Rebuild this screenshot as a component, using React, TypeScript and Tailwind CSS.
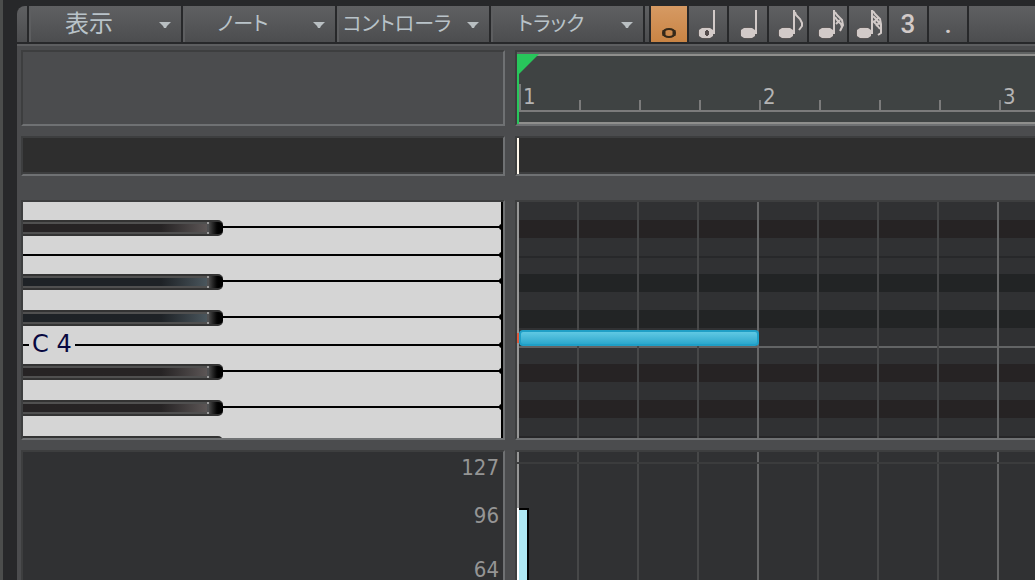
import { useState, type ReactNode } from 'react';

const MENUS = [
  { label: '表示', size: 'text-2xl' },
  { label: 'ノート', size: 'text-xl' },
  { label: 'コントローラ', size: 'text-xl' },
  { label: 'トラック', size: 'text-xl' },
];

const BLACK_KEYS = [
  { top: 'top-[18px]', warm: true },
  { top: 'top-[72px]', warm: false },
  { top: 'top-[108px]', warm: false },
  { top: 'top-[162px]', warm: true },
  { top: 'top-[198px]', warm: true },
  { top: 'top-[234px]', warm: true },
];

const KEY_LINES = ['top-[24px]', 'top-[52px]', 'top-[78px]', 'top-[114px]', 'top-[142px]', 'top-[168px]', 'top-[204px]'];

const ROWS = [
  'h-[18px] bg-[#303133]',
  'h-[18px] bg-[#262324]',
  'h-[18px] bg-[#303133]',
  'h-[2px] bg-[#27282a]',
  'h-[16px] bg-[#303133]',
  'h-[18px] bg-[#222425]',
  'h-[18px] bg-[#303133]',
  'h-[18px] bg-[#222425]',
  'h-[18px] bg-[#303133]',
  'h-[2px] bg-[#626465]',
  'h-[16px] bg-[#303133]',
  'h-[18px] bg-[#262324]',
  'h-[18px] bg-[#303133]',
  'h-[18px] bg-[#262324]',
  'h-[18px] bg-[#303133]',
  'h-[2px] bg-[#262628]',
];

const BEATS = Array.from({ length: 12 }, (_, i) => i);

interface StemmedNoteProps {
  cx: number;
  hollow?: boolean;
  children?: ReactNode;
}

function StemmedNote({ cx, hollow, children }: StemmedNoteProps) {
  return (
    <svg viewBox="0 0 38 36" className="h-9 w-[38px]" fill="none" stroke="#d2cac8" strokeWidth="2">
      <ellipse cx={cx} cy="27" rx="8" ry="6" fill="#6a5f5c" fillOpacity="0.6" stroke="none" />
      <path d={`M${cx - 4} 22h8l3 2v6l-3 2h-8l-3-2v-6z`} fill="#d2cac8" stroke="none" />
      {hollow && <path d={`M${cx} 24h2v1h1v4h-1v1h-2v-1h-1v-4h1z`} fill="#544c4c" stroke="none" />}
      <path d={`M${cx + 8} 4v24`} />
      {children}
    </svg>
  );
}

function WholeNote() {
  return (
    <svg viewBox="0 0 36 36" className="h-9 w-9">
      <ellipse cx="18" cy="27" rx="6" ry="4" fill="none" stroke="#35291a" strokeWidth="2" />
      <path d="M13 24v6M23 24v6" stroke="#35291a" strokeWidth="3" />
    </svg>
  );
}

const LENGTHS = [
  { name: 'Whole note', icon: <WholeNote /> },
  { name: 'Half note', icon: <StemmedNote cx={17} hollow /> },
  { name: 'Quarter note', icon: <StemmedNote cx={19} /> },
  {
    name: 'Eighth note',
    icon: (
      <StemmedNote cx={17}>
        <path d="M26 6l1 3 4 4 2 4v3l-3 4" />
      </StemmedNote>
    ),
  },
  {
    name: 'Sixteenth note',
    icon: (
      <StemmedNote cx={17}>
        <path d="M26 6l2 3 5 5 1 5-3 6M26 11l2 3 4 4 1 3M27 18l4-4" />
      </StemmedNote>
    ),
  },
  {
    name: 'Thirty-second note',
    icon: (
      <StemmedNote cx={15}>
        <path d="M24 5l2 3 5 5 1 5v9l-3 2M24 10l3 3 5 6M24 15l3 3 4 5M25 16l4-4M27 20l4-4" />
      </StemmedNote>
    ),
  },
  { name: 'Triplet', icon: '3' },
  { name: 'Dotted', icon: '.' },
];

function Toolbar() {
  const [length, setLength] = useState('Whole note');

  return (
    <div className="flex h-[38px] shrink-0 overflow-hidden rounded-tl-lg border-b-2 border-[#27282a] bg-linear-to-b from-[#5f6062] to-[#4c4d4f]">
      <div className="w-3 shrink-0 border-r-2 border-[#27282a]" />
      {MENUS.map(({ label, size }) => (
        <button
          key={label}
          type="button"
          className="flex w-[154px] shrink-0 items-center gap-3 border-r-2 border-l-2 border-r-[#27282a] border-l-[#5d5e60] text-[#b9c3c9] [font-feature-settings:'palt']"
        >
          <span className={`w-[116px] shrink-0 text-center whitespace-nowrap ${size}`}>{label}</span>
          <svg viewBox="0 0 12 8" className="h-2 w-3 shrink-0" fill="#b9bfc2">
            <path d="M0 2h12l-2 2-2 2-1 2H5L4 6 2 4z" />
          </svg>
        </button>
      ))}
      <div className="w-[6px] shrink-0 border-r-2 border-[#27282a]" />
      {LENGTHS.map(({ name, icon }) => (
        <button
          key={name}
          type="button"
          aria-label={name}
          aria-pressed={length === name}
          onClick={() => setLength(name)}
          className={`flex shrink-0 justify-center border-r-2 border-[#27282a] font-['Roboto',sans-serif] text-[26px] leading-9 font-medium text-[#d2cac8] ${
            name === 'Whole note' ? 'w-[38px]' : 'w-10'
          } ${length === name ? 'bg-linear-to-b from-[#d69a63] to-[#c98444]' : ''}`}
        >
          {icon}
        </button>
      ))}
    </div>
  );
}

const FRAME = 'relative overflow-hidden border-2 border-t-[#3d3e3f] border-l-[#3d3e3f] border-b-[#6f7173]';

function BeatLines() {
  return (
    <div className="absolute inset-0 flex">
      <div className="w-[2px] shrink-0 bg-[#979797]" />
      {BEATS.map((beat) => (
        <div
          key={beat}
          className={`w-[60px] shrink-0 border-r-2 ${beat % 4 === 3 ? 'border-[#656667]' : 'border-[#464748]'}`}
        />
      ))}
    </div>
  );
}

function Ruler() {
  return (
    <div className={`${FRAME} border-r-0 bg-[#3f4343]`}>
      <div className="flex h-full flex-col">
        <div className="h-[2px] shrink-0 bg-[#5f6262]" />
        <div className="h-[2px] shrink-0 bg-[#8f8f8d]" />
        <div className="flex flex-1 items-end border-b-2 border-[#7b7b7b] pl-[2px]">
          {BEATS.map((beat) => (
            <div key={beat} className="flex h-[26px] w-[60px] shrink-0 items-end">
              <div className={`w-[2px] bg-[#7b7b7b] ${beat === 0 ? 'h-[26px]' : 'h-[10px]'}`} />
              {beat % 4 === 0 && <span className="pl-[2px] text-[22px] leading-[26px] text-[#b4b4b4]">{beat / 4 + 1}</span>}
            </div>
          ))}
        </div>
        <div className="h-3 shrink-0 border-b-2 border-[#8f8f8d]" />
      </div>
      <svg viewBox="0 0 24 70" className="absolute top-[2px] left-0 h-[70px] w-6" fill="#28c65b">
        <path d="M0 0h22L2 20v50H0z" />
      </svg>
    </div>
  );
}

function Keyboard() {
  return (
    <div className={`${FRAME} border-r-[#6f7173] bg-[#d5d5d5]`}>
      {KEY_LINES.map((top) => (
        <div key={top} className={`absolute inset-x-0 h-[2px] bg-black ${top}`}>
          <div className="absolute -top-[2px] right-[1px] h-[6px] w-[3px] rounded-l-full bg-black" />
        </div>
      ))}
      {BLACK_KEYS.map(({ top, warm }) => (
        <div key={top} className={`absolute left-0 flex h-4 w-[200px] ${top}`}>
          <div
            className={`flex-1 border-y-2 border-[#333] bg-linear-to-r from-75% ${
              warm ? 'from-[#262324] to-[#5c5656]' : 'from-[#1e2226] to-[#4a565d]'
            }`}
          >
            <div className="h-full border-y-2 border-[#505050]" />
          </div>
          <div className="w-[2px] border-y-2 border-[#333] bg-[#4f5052]">
            <div className="h-full border-y-2 border-[#9a9a9a]" />
          </div>
          <div className="w-[14px] rounded-r-[5px] border-y-2 border-[#333] bg-linear-to-r from-[#484848] to-black to-80%" />
        </div>
      ))}
      <span className="absolute top-[126px] left-[6px] w-[46px] bg-[#d5d5d5] pl-[3px] font-['DejaVu_Sans',sans-serif] text-2xl leading-8 whitespace-nowrap text-[#080840]">
        C 4
      </span>
      <div className="absolute inset-y-0 right-0 w-[2px] bg-black" />
    </div>
  );
}

function NoteGrid() {
  return (
    <div className={`${FRAME} border-r-0`}>
      {ROWS.map((row, i) => (
        <div key={i} className={row} />
      ))}
      <BeatLines />
      <div className="absolute top-[131px] left-0 h-[10px] w-[2px] bg-[#e0583a]" />
      <div className="absolute top-[128px] left-[2px] h-4 w-[240px] rounded-[4px] border-2 border-[#1f9fc6] bg-linear-to-b from-[#5fc8e3] to-[#2aa8cd]" />
    </div>
  );
}

function VelocityLane() {
  return (
    <div className={`${FRAME} border-r-0 border-b-0 bg-[#303133]`}>
      <BeatLines />
      <div className="absolute inset-x-0 top-[10px] h-[2px] bg-[#3b3c3d]" />
      <div className="absolute top-[56px] bottom-0 left-0 flex w-3">
        <div className="w-[2px] bg-white" />
        <div className="flex-1 border-t-2 border-r-2 border-black bg-[#ade7f3]" />
      </div>
    </div>
  );
}

export default function App() {
  return (
    <div className="flex h-screen overflow-hidden bg-[#27282a] font-['DejaVu_Sans_Condensed','DejaVu_Sans','Noto_Sans_CJK_JP',sans-serif]">
      <div className="w-[3px] shrink-0 bg-[#4b4d4c]" />
      <div className="ml-[14px] flex min-w-0 flex-1 flex-col pt-[6px]">
        <Toolbar />
        <div className="flex min-h-0 flex-1 flex-col border-t-2 border-[#5d5e60] bg-[#4b4c4e] pt-1 pl-1">
          <div className="grid min-h-0 flex-1 grid-cols-[484px_minmax(0,1fr)] grid-rows-[76px_50px_264px_minmax(0,1fr)] gap-x-2.5">
            <div className={`${FRAME} border-r-[#6f7173]`} />
            <Ruler />
            <div className={`${FRAME} mt-2.5 border-r-[#6f7173] bg-[#2e2e2e]`}>
              <div className="h-full border-b-2 border-[#3d3e3f]" />
            </div>
            <div className={`${FRAME} mt-2.5 border-r-0 bg-[#2e2e2e]`}>
              <div className="h-full border-b-2 border-[#3d3e3f]" />
              <div className="absolute inset-y-0 left-0 w-[2px] bg-[#fff8ec]" />
            </div>
            <div className="grid pt-6">
              <Keyboard />
            </div>
            <div className="grid pt-6">
              <NoteGrid />
            </div>
            <div className="grid pt-2.5">
              <div className={`${FRAME} border-r-[#6f7173] border-b-0 bg-[#303133] pr-1 text-right text-[22px] leading-5 text-[#959595]`}>
                <div className="pt-[6px]">127</div>
                <div className="pt-7">96</div>
                <div className="pt-[34px]">64</div>
              </div>
            </div>
            <div className="grid pt-2.5">
              <VelocityLane />
            </div>
          </div>
        </div>
      </div>
    </div>
  );
}
